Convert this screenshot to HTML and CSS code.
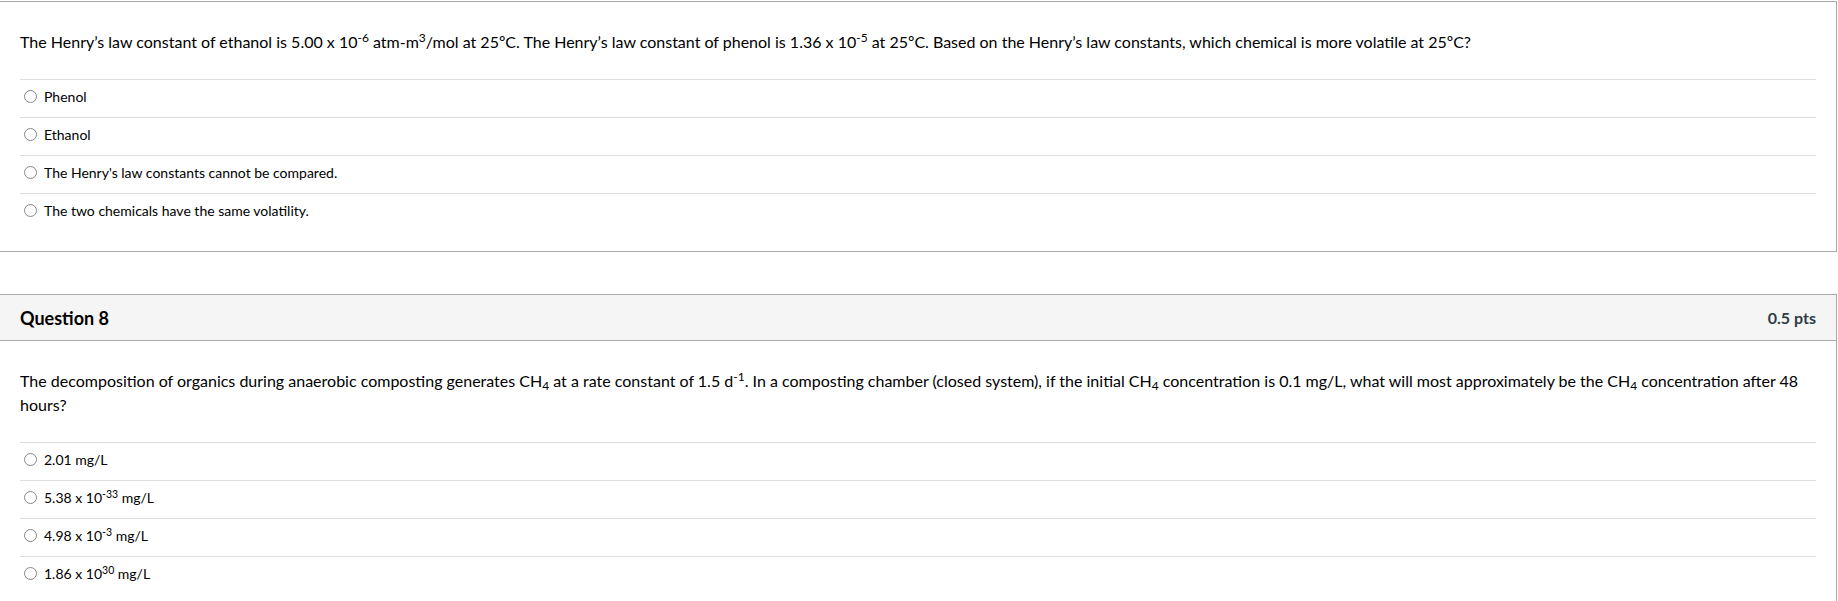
FILE: index.html
```html
<!DOCTYPE html>
<html>
<head>
<meta charset="utf-8">
<link rel="stylesheet" href="styles.css">
</head>
<body>
<div class="page">
  <div class="card card-first">
    <div class="qbody">
      <div class="qtext">The Henry’s law constant of ethanol is 5.00 x 10<sup>-6</sup> atm-m<sup>3</sup>/mol at 25ºC. The Henry’s law constant of phenol is 1.36 x 10<sup>-5</sup> at 25ºC. Based on the Henry’s law constants, which chemical is more volatile at 25ºC?</div>
      <div class="answers">
        <div class="answer"><span class="radio"></span><span class="label">Phenol</span></div>
        <div class="answer"><span class="radio"></span><span class="label">Ethanol</span></div>
        <div class="answer"><span class="radio"></span><span class="label">The Henry's law constants cannot be compared.</span></div>
        <div class="answer"><span class="radio"></span><span class="label">The two chemicals have the same volatility.</span></div>
      </div>
    </div>
  </div>

  <div class="card card-second">
    <div class="qheader">
      <span class="qtitle">Question 8</span>
      <span class="qpts">0.5 pts</span>
    </div>
    <div class="qbody">
      <div class="qtext">The decomposition of organics during anaerobic composting generates CH<sub>4</sub> at a rate constant of 1.5 d<sup>-1</sup>. In a composting chamber (closed system), if the initial CH<sub>4</sub> concentration is 0.1 mg/L, what will most approximately be the CH<sub>4</sub> concentration after 48 hours?</div>
      <div class="answers">
        <div class="answer"><span class="radio"></span><span class="label">2.01 mg/L</span></div>
        <div class="answer"><span class="radio"></span><span class="label">5.38 x 10<sup>-33</sup> mg/L</span></div>
        <div class="answer"><span class="radio"></span><span class="label">4.98 x 10<sup>-3</sup> mg/L</span></div>
        <div class="answer"><span class="radio"></span><span class="label">1.86 x 10<sup>30</sup> mg/L</span></div>
      </div>
    </div>
  </div>
</div>
</body>
</html>
```

FILE: styles.css
```css
html, body {
  margin: 0;
  padding: 0;
  background: #ffffff;
}

body {
  font-family: Lato, "Open Sans", "Liberation Sans", sans-serif;
  color: #2d3b45;
}

.page {
  width: 1838px;
  padding-top: 1px;
}

.card {
  margin-left: -1px;
  width: 1836px;
  border: 1px solid #aaaaaa;
  background: #ffffff;
}

.card-second {
  margin-top: 42px;
}

.qheader {
  display: flex;
  justify-content: space-between;
  align-items: center;
  height: 45px;
  padding: 0 20px 0 20px;
  background: #f5f5f5;
  border-bottom: 1px solid #aaaaaa;
}

.qtitle {
  font-size: 18px;
  font-weight: bold;
  color: #000000;
}

.qpts {
  font-size: 16px;
  font-weight: bold;
  color: #2d3b45;
}

.qbody {
  padding: 28px 20px 20px 20px;
}

.qtext {
  font-size: 16px;
  line-height: 24px;
  color: #000000;
  padding-bottom: 25px;
}

.qtext sup,
.answer sup {
  font-size: 0.75em;
  line-height: 0;
  vertical-align: 0.5em;
}

.qtext sub {
  font-size: 0.75em;
  line-height: 0;
  vertical-align: -0.25em;
}

.answer {
  display: flex;
  align-items: center;
  box-sizing: border-box;
  height: 38px;
  padding-bottom: 5px;
  border-top: 1px solid #dddddd;
  font-size: 14px;
}

.radio {
  width: 11px;
  height: 11px;
  border: 1px solid #888888;
  border-radius: 50%;
  margin-left: 4px;
  margin-right: 7px;
  flex: none;
}

.label {
  color: #000000;
}
```
